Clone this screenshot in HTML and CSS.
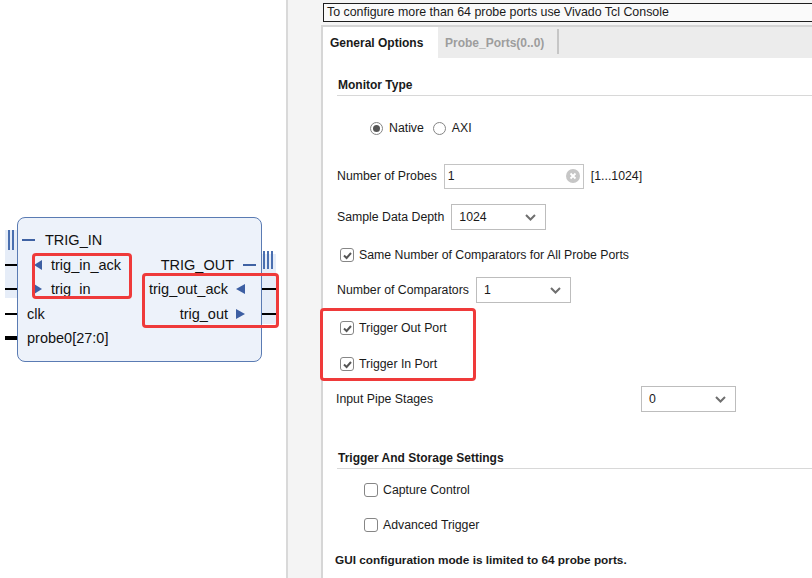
FILE: index.html
```html
<!DOCTYPE html>
<html lang="en">
<head>
    <meta charset="UTF-8">
    <title>ILA Customize IP</title>
    <link rel="stylesheet" href="styles.css">
</head>
<body>
    <div class="page">
        <!-- symbol preview -->
        <div class="canvas">
            <div class="bus-zone left-zone"></div>
            <div class="bus-zone right-zone"></div>
            <div class="block">
                <div class="col col-left">
                    <div class="row row-bus">
                        <svg class="bus-mark bus-left" width="7" height="20"><rect x="0" y="0" width="2" height="20"/><rect x="4" y="0" width="2" height="20"/></svg>
                        <span class="dash"></span>TRIG_IN
                    </div>
                    <div class="row row-arrow pin-l">
                        <svg class="tri" width="8" height="10"><polygon points="8,0 8,10 0,5"/></svg>trig_in_ack
                    </div>
                    <div class="row row-arrow pin-l">
                        <svg class="tri" width="8" height="10"><polygon points="0,0 8,5 0,10"/></svg>trig_in
                    </div>
                    <div class="row row-plain pin-l">clk</div>
                    <div class="row row-plain pin-l pin-wide">probe0[27:0]</div>
                </div>
                <div class="col col-right">
                    <div class="row row-bus-r">
                        TRIG_OUT<span class="dash"></span>
                        <svg class="bus-mark bus-right" width="11" height="18"><rect x="0" y="0" width="2" height="18"/><rect x="4" y="0" width="2" height="18"/><rect x="8" y="0" width="2" height="18"/></svg>
                    </div>
                    <div class="row row-arrow-r pin-r">
                        trig_out_ack<svg class="tri" width="9" height="10"><polygon points="9,0 9,10 0,5"/></svg>
                    </div>
                    <div class="row row-arrow-r pin-r">
                        trig_out<svg class="tri" width="9" height="10"><polygon points="0,0 9,5 0,10"/></svg>
                    </div>
                </div>
            </div>
            <div class="mark mark-in"></div>
            <div class="mark mark-out"></div>
        </div>

        <div class="splitter"></div>

        <!-- options pane -->
        <div class="pane">
            <div class="notice">To configure more than 64 probe ports use Vivado Tcl Console</div>
            <div class="tabs-panel">
                <div class="tabs">
                    <div class="tab active">General Options</div>
                    <div class="tab">Probe_Ports(0..0)</div>
                    <span class="tab-sep"></span>
                </div>
                <div class="content">
                    <div class="section-title first">Monitor Type</div>

                    <div class="row-f radios">
                        <span class="radio on"></span><span class="opt">Native</span>
                        <span class="radio"></span><span class="opt">AXI</span>
                    </div>

                    <div class="row-f probes">
                        <span class="lbl">Number of Probes</span>
                        <div class="field">
                            <span>1</span>
                            <svg class="clear" width="14" height="14" viewBox="0 0 14 14"><circle cx="7" cy="7" r="7"/><path d="M4.5 4.5 L9.5 9.5 M9.5 4.5 L4.5 9.5"/></svg>
                        </div>
                        <span class="range">[1...1024]</span>
                    </div>

                    <div class="row-f depth">
                        <span class="lbl">Sample Data Depth</span>
                        <div class="select"><span>1024</span><svg class="chev" width="11" height="7"><polyline points="1,1 5.5,5.5 10,1"/></svg></div>
                    </div>

                    <div class="row-f same">
                        <span class="check on"><svg width="11" height="11"><polyline points="2,5.5 4.6,8 9,3"/></svg></span>
                        <span>Same Number of Comparators for All Probe Ports</span>
                    </div>

                    <div class="row-f comps">
                        <span class="lbl">Number of Comparators</span>
                        <div class="select"><span>1</span><svg class="chev" width="11" height="7"><polyline points="1,1 5.5,5.5 10,1"/></svg></div>
                    </div>

                    <div class="row-f trig-out">
                        <span class="check on"><svg width="11" height="11"><polyline points="2,5.5 4.6,8 9,3"/></svg></span>
                        <span>Trigger Out Port</span>
                    </div>

                    <div class="row-f trig-in">
                        <span class="check on"><svg width="11" height="11"><polyline points="2,5.5 4.6,8 9,3"/></svg></span>
                        <span>Trigger In Port</span>
                    </div>

                    <div class="row-f pipe">
                        <span class="lbl pipe-lbl">Input Pipe Stages</span>
                        <div class="select"><span>0</span><svg class="chev" width="11" height="7"><polyline points="1,1 5.5,5.5 10,1"/></svg></div>
                    </div>

                    <div class="section-title second">Trigger And Storage Settings</div>

                    <div class="row-f capture">
                        <span class="check"></span>
                        <span>Capture Control</span>
                    </div>

                    <div class="row-f advanced">
                        <span class="check"></span>
                        <span>Advanced Trigger</span>
                    </div>

                    <div class="limit">GUI configuration mode is limited to 64 probe ports.</div>

                    <div class="mark mark-trig"></div>
                </div>
            </div>
        </div>
    </div>
</body>
</html>
```

FILE: styles.css
```css
body {
    margin: 0;
    width: 812px;
    height: 578px;
    overflow: hidden;
    background-color: #fff;
    font-family: "Liberation Sans", Arial, sans-serif;
    color: #1a1a1a;
}
.page {
    display: flex;
    height: 578px;
}

/* ---- symbol canvas ---- */
.canvas {
    position: relative;
    width: 285px;
    flex: none;
    background-color: #fff;
}
.bus-zone {
    position: absolute;
    background-color: #e6edf8;
}
.left-zone {
    left: 5px;
    top: 230px;
    width: 12px;
    height: 68px;
}
.right-zone {
    left: 261px;
    top: 254px;
    width: 15px;
    height: 70px;
}
.block {
    position: absolute;
    left: 17px;
    top: 217px;
    width: 245px;
    height: 145px;
    box-sizing: border-box;
    border: 1px solid #5a7bb3;
    border-radius: 8px;
    background-color: #edf2fa;
    display: flex;
    justify-content: space-between;
    padding-top: 10px;
    font-size: 14.5px;
    color: #111;
}
.col {
    display: flex;
    flex-direction: column;
}
.col-right {
    padding-top: 24.5px;
    align-items: flex-end;
}
.row {
    position: relative;
    height: 24.5px;
    display: flex;
    align-items: center;
    white-space: nowrap;
}
.dash {
    display: inline-block;
    width: 13px;
    height: 2px;
    background-color: #3f62a3;
}
.row-bus {
    padding-left: 4px;
}
.row-bus .dash {
    margin-right: 10px;
}
.row-bus-r {
    padding-right: 5px;
}
.row-bus-r .dash {
    margin-left: 9px;
}
.bus-mark {
    position: absolute;
    fill: #4a6fb0;
}
.bus-left {
    left: -10px;
    top: 2px;
}
.bus-right {
    right: -13px;
    top: -2px;
}
.tri {
    fill: #3d5fa3;
}
.row-arrow {
    padding-left: 16px;
}
.row-arrow .tri {
    margin-right: 9px;
}
.row-arrow-r {
    padding-right: 16px;
}
.row-arrow-r .tri {
    margin-left: 8px;
}
.row-plain {
    padding-left: 9px;
}
.pin-l::before,
.pin-r::after {
    content: "";
    position: absolute;
    top: 50%;
    height: 2px;
    margin-top: -1px;
    background-color: #000;
}
.pin-l::before {
    left: -13px;
    width: 12px;
}
.pin-wide::before {
    height: 4px;
    margin-top: -2px;
}
.pin-r::after {
    right: -15px;
    width: 14px;
}

/* red highlight frames */
.mark {
    position: absolute;
    box-sizing: border-box;
    border: 3px solid #ef3a3a;
    border-radius: 4px;
}
.mark-in {
    left: 32px;
    top: 253px;
    width: 100px;
    height: 46px;
}
.mark-out {
    left: 142px;
    top: 273px;
    width: 137px;
    height: 55px;
}

.splitter {
    width: 2px;
    flex: none;
    background-color: #d9d9d9;
    margin-left: 1px;
}

/* ---- options pane ---- */
.pane {
    flex: 1;
    min-width: 0;
    background-color: #f4f4f4;
    padding: 3px 0 0 33px;
    display: flex;
    flex-direction: column;
    font-size: 12.3px;
}
.notice {
    margin-left: 2px;
    height: 17px;
    line-height: 17px;
    border: 1px solid #1e1e1e;
    border-right: none;
    background-color: #fafafa;
    padding-left: 3px;
    white-space: nowrap;
    font-size: 12.4px;
}
.tabs-panel {
    flex: 1;
    margin-top: 3px;
    border-top: 2px solid #d4d4d4;
    border-left: 2px solid #d6d6d6;
    display: flex;
    flex-direction: column;
}
.tabs {
    display: flex;
    align-items: stretch;
    height: 31px;
    background-color: #ececec;
}
.tab {
    display: flex;
    align-items: center;
    padding: 0 8px 0 7px;
    font-weight: bold;
    font-size: 12px;
    color: #9d9d9d;
}
.tab.active {
    width: 115px;
    box-sizing: border-box;
    background-color: #fff;
    color: #1a1a1a;
}
.tab-sep {
    width: 2px;
    margin: 2px 0 4px 5px;
    background-color: #c6c6c6;
}
.content {
    position: relative;
    flex: 1;
    background-color: #fff;
    padding-left: 14px;
}
.section-title {
    font-weight: bold;
    font-size: 12px;
    line-height: 16px;
    padding: 0 0 2px 1px;
    border-bottom: 1px solid #d8d8d8;
}
.section-title.first {
    margin-top: 19px;
}
.section-title.second {
    margin-top: 38px;
}
.row-f {
    display: flex;
    align-items: center;
    height: 26px;
    white-space: nowrap;
}
.lbl {
    margin-right: 7px;
}
.radios {
    margin-top: 19px;
    padding-left: 33px;
}
.radio {
    width: 13px;
    height: 13px;
    box-sizing: border-box;
    border: 1px solid #858585;
    border-radius: 50%;
    background-color: #fff;
    display: flex;
    align-items: center;
    justify-content: center;
    margin-right: 6px;
}
.radio.on::after {
    content: "";
    width: 7px;
    height: 7px;
    border-radius: 50%;
    background-color: #555;
}
.opt {
    margin-right: 9px;
}
.probes {
    margin-top: 22px;
}
.field {
    width: 140px;
    height: 25px;
    box-sizing: border-box;
    border: 1px solid #c4c4c4;
    display: flex;
    align-items: center;
    justify-content: space-between;
    padding: 0 3px 0 3px;
}
.clear circle {
    fill: #c6c6c6;
}
.clear path {
    stroke: #fff;
    stroke-width: 1.8;
}
.range {
    margin-left: 7px;
}
.depth {
    margin-top: 15px;
}
.select {
    width: 95px;
    height: 26px;
    box-sizing: border-box;
    border: 1px solid #bdbdbd;
    background-color: #fff;
    display: flex;
    align-items: center;
    justify-content: space-between;
    padding: 0 9px 0 7px;
}
.chev polyline {
    fill: none;
    stroke: #6f6f6f;
    stroke-width: 2;
}
.check {
    width: 14px;
    height: 14px;
    box-sizing: border-box;
    border: 1px solid #868686;
    border-radius: 3px;
    background-color: #fff;
    display: flex;
    align-items: center;
    justify-content: center;
    margin: 0 5px 0 3px;
}
.check polyline {
    fill: none;
    stroke: #555;
    stroke-width: 2;
}
.same {
    margin-top: 12px;
}
.comps {
    margin-top: 9px;
}
.trig-out {
    margin-top: 12px;
}
.trig-in {
    margin-top: 10px;
}
.pipe {
    margin-top: 9px;
}
.pipe-lbl {
    width: 305px;
    margin-right: 0;
    margin-left: -1px;
}
.capture {
    margin-top: 8px;
    padding-left: 24px;
}
.advanced {
    margin-top: 9px;
    padding-left: 24px;
}
.limit {
    margin-top: 14px;
    margin-left: -2px;
    line-height: 16px;
    font-weight: bold;
    font-size: 11.8px;
}
.mark-trig {
    left: -3px;
    top: 250px;
    width: 156px;
    height: 73px;
}
```
